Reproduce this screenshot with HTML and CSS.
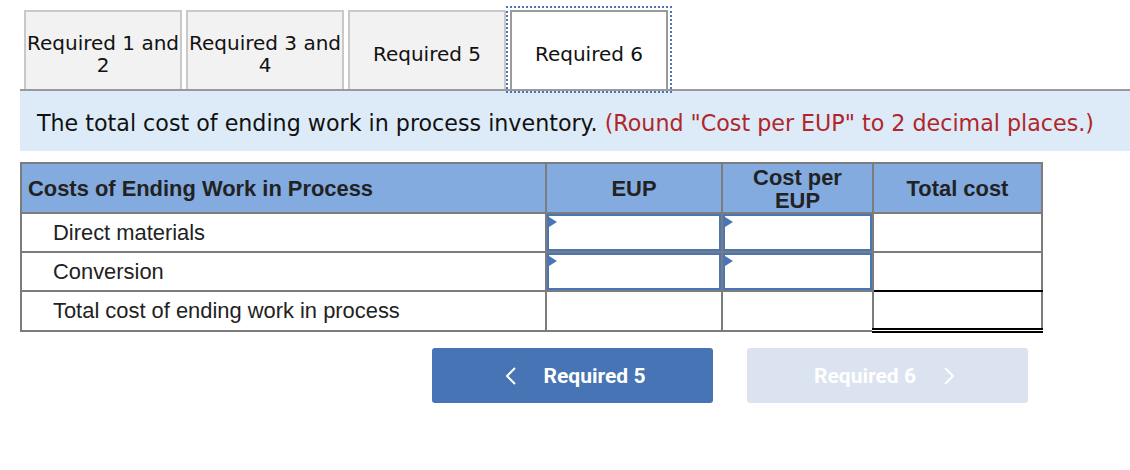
FILE: index.html
```html
<!DOCTYPE html>
<html>
<head>
<meta charset="utf-8">
<link rel="stylesheet" href="styles.css">
</head>
<body>
<div class="wrap">
  <div class="tabs">
    <div class="tab">Required 1 and<br>2</div>
    <div class="tab">Required 3 and<br>4</div>
    <div class="tab">Required 5</div>
    <div class="tab active">Required 6</div>
  </div>
  <div class="banner">The total cost of ending work in process inventory. <span class="note">(Round "Cost per EUP" to 2 decimal places.)</span></div>
  <table class="grid">
    <colgroup>
      <col class="c1"><col class="c2"><col class="c3"><col class="c4">
    </colgroup>
    <thead>
      <tr>
        <th class="left">Costs of Ending Work in Process</th>
        <th>EUP</th>
        <th class="two">Cost per<br>EUP</th>
        <th>Total cost</th>
      </tr>
    </thead>
    <tbody>
      <tr>
        <td class="label">Direct materials</td>
        <td class="in"><div class="field"></div></td>
        <td class="in"><div class="field"></div></td>
        <td></td>
      </tr>
      <tr>
        <td class="label">Conversion</td>
        <td class="in"><div class="field"></div></td>
        <td class="in"><div class="field"></div></td>
        <td class="sub"></td>
      </tr>
      <tr class="last">
        <td class="label">Total cost of ending work in process</td>
        <td></td>
        <td></td>
        <td class="total"></td>
      </tr>
    </tbody>
  </table>
  <div class="nav">
    <div class="btn prev"><svg class="chev" width="12" height="20" viewBox="0 0 12 20"><polyline points="10,2 2,10 10,18" fill="none" stroke="#ffffff" stroke-width="2"/></svg><span>Required 5</span></div>
    <div class="btn next"><span>Required 6</span><svg class="chev" width="12" height="20" viewBox="0 0 12 20"><polyline points="2,2 10,10 2,18" fill="none" stroke="#ffffff" stroke-width="2"/></svg></div>
  </div>
</div>
</body>
</html>
```
FILE: styles.css
```css
html, body {
  margin: 0;
  padding: 0;
  background: #ffffff;
}
.wrap {
  margin-left: 20px;
  padding-top: 10px;
}
.tabs {
  display: flex;
  gap: 4px;
  padding-left: 4px;
  border-bottom: 2px solid #9a9a9a;
  height: 79px;
}
.tab {
  box-sizing: border-box;
  width: 158px;
  height: 79px;
  background: #f2f2f2;
  border: 2px solid #c9c9c9;
  border-bottom: none;
  display: flex;
  align-items: center;
  justify-content: center;
  text-align: center;
  font-family: "DejaVu Sans", Verdana, sans-serif;
  font-size: 20px;
  line-height: 22px;
  color: #111;
  padding-top: 6px;
  white-space: nowrap;
}
.tab.active {
  background: #ffffff;
  border-color: #9a9a9a;
  outline: 2px dotted #4a76b8;
  outline-offset: 2px;
}
.banner {
  background: #ddebf8;
  height: 60px;
  box-sizing: border-box;
  padding: 19px 0 0 17px;
  font-family: "DejaVu Sans", Verdana, sans-serif;
  font-size: 22.2px;
  color: #111;
  white-space: nowrap;
}
.note {
  color: #b0262a;
}
.grid {
  margin-top: 11px;
  border-collapse: collapse;
  width: 1021px;
  table-layout: fixed;
  font-family: "Liberation Sans", Arial, sans-serif;
  font-size: 21.9px;
  color: #222;
}
.c1 { width: 525px; }
.c2 { width: 176px; }
.c3 { width: 151px; }
.c4 { width: 169px; }
.grid th, .grid td {
  border: 2px solid #7c7c7c;
  padding: 0;
}
.grid th {
  background: #83abdf;
  height: 47px;
  font-weight: bold;
  text-align: center;
  line-height: 22px;
  padding-top: 1px;
}
.grid th.two {
  line-height: 23px;
}
.grid th.left {
  text-align: left;
  padding-left: 6px;
}
.grid td {
  height: 37px;
}
.grid tr.last td {
  height: 36px;
}
.grid td.label {
  padding-left: 31px;
}
.field {
  box-sizing: border-box;
  height: 37px;
  border: 2px solid #4a76b8;
  position: relative;
}
.field::before {
  content: "";
  position: absolute;
  left: 0;
  top: 1px;
  border-top: 5px solid transparent;
  border-bottom: 5px solid transparent;
  border-left: 8px solid #4a76b8;
}
.grid td.sub {
  border-bottom: 2px solid #000;
}
.grid td.total {
  border-top: 2px solid #000;
  border-bottom: 5px double #000;
}
.nav {
  display: flex;
  gap: 34px;
  margin-top: 15px;
  padding-left: 412px;
}
.btn {
  box-sizing: border-box;
  width: 281px;
  height: 55px;
  border-radius: 3px;
  display: flex;
  align-items: center;
  justify-content: center;
  gap: 27px;
  font-family: Roboto, "Liberation Sans", sans-serif;
  font-weight: bold;
  font-size: 21px;
  color: #ffffff;
}
.btn.prev {
  background: #4674b4;
  padding-left: 5px;
}
.btn.next {
  background: #dae3ef;
  padding-right: 6px;
}
.chev {
  display: block;
}
```
